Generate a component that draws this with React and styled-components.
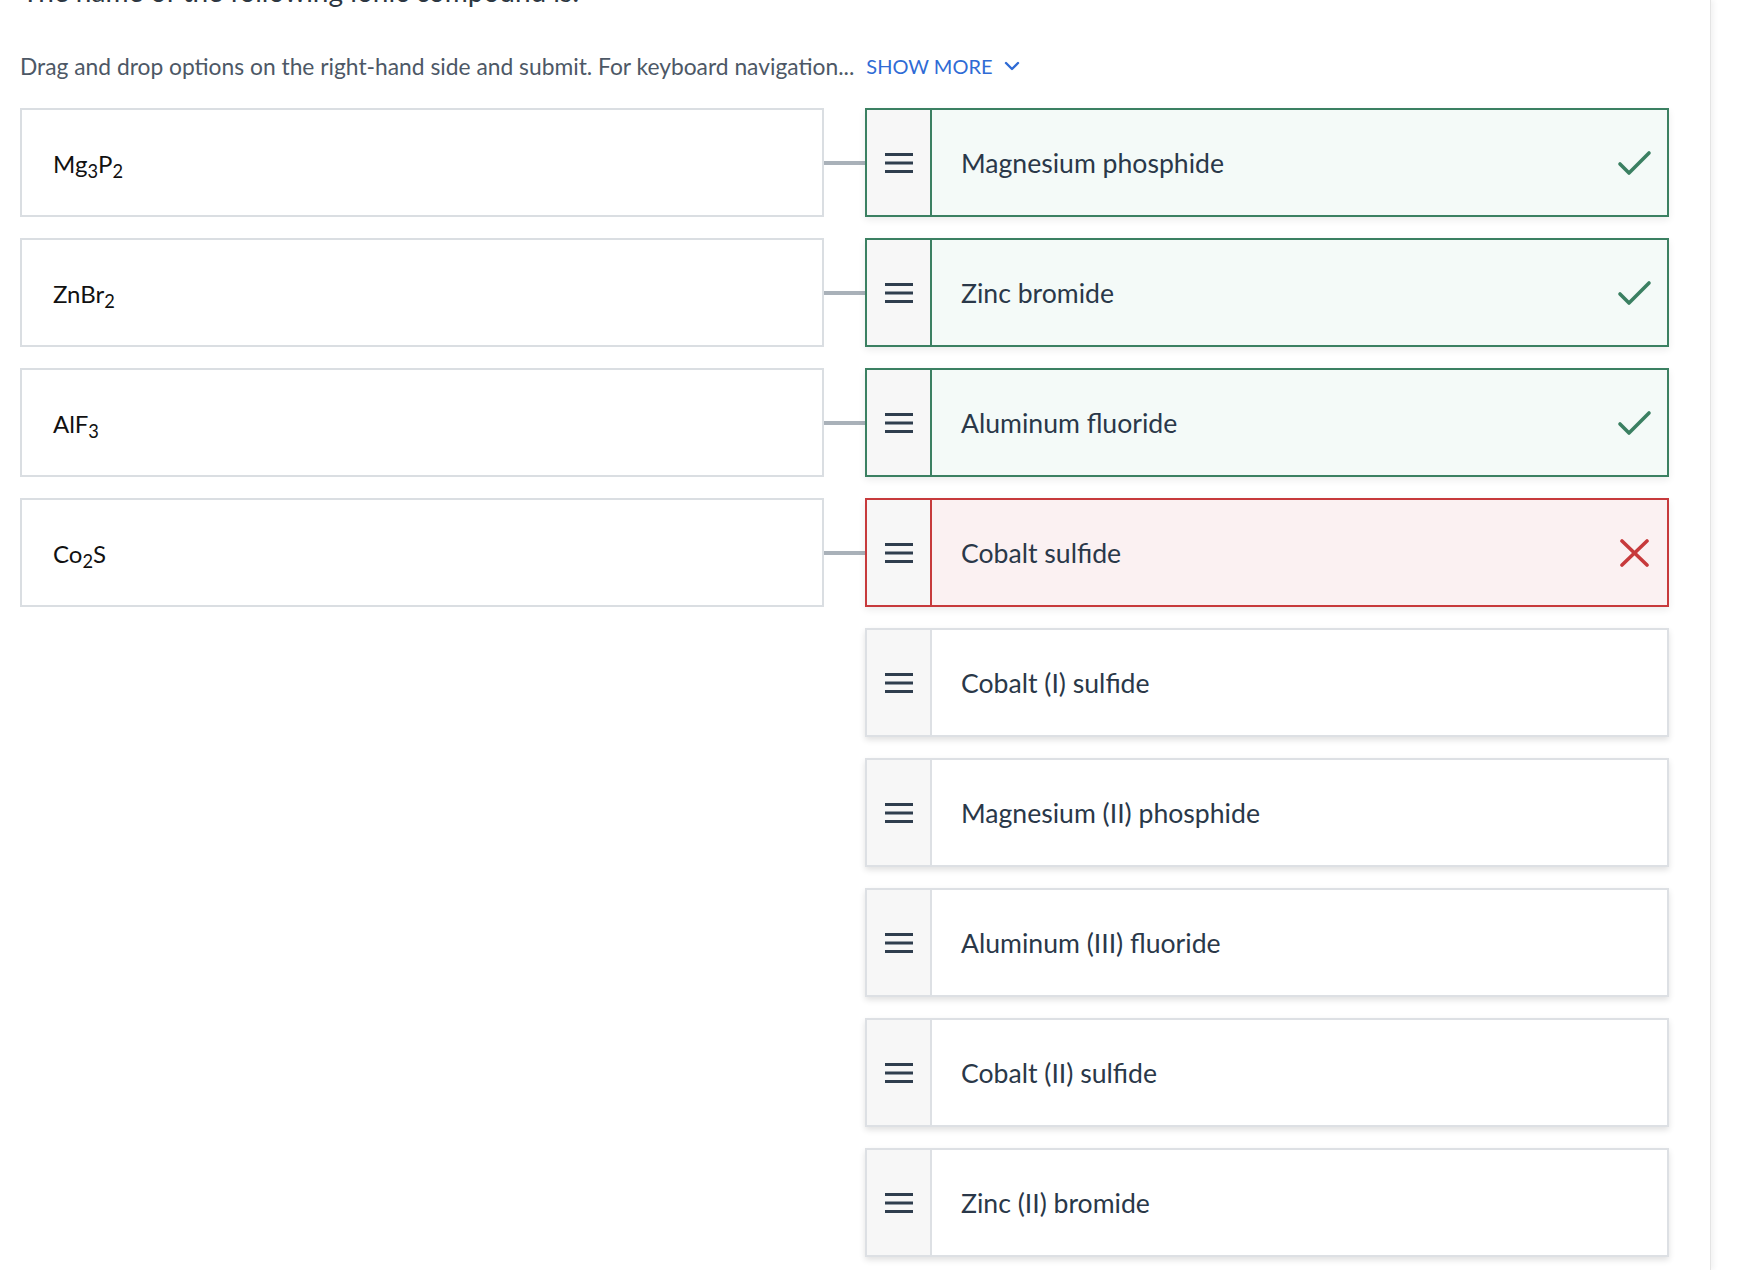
import React from "react";
import styled, { createGlobalStyle } from "styled-components";

const Global = createGlobalStyle`
  html, body { margin: 0; padding: 0; background: #ffffff; }
  body { font-family: "Lato", "Open Sans", "Liberation Sans", sans-serif; }
  * { box-sizing: border-box; }
`;

const Page = styled.div`
  display: flex;
  min-height: 1270px;
  overflow: hidden;
`;

const Main = styled.main`
  width: 1711px;
  flex: none;
  padding: 0 0 0 20px;
  border-right: 1px solid #e4e4e4;
  box-shadow: 3px 0 5px rgba(0, 0, 0, 0.05);
`;

const Title = styled.h2`
  margin: -25px 0 0 2px;
  font-size: 28px;
  line-height: 32px;
  font-weight: 400;
  color: #2d3742;
`;

const Instructions = styled.p`
  margin: 42px 0 0;
  height: 34px;
  display: flex;
  align-items: center;
  gap: 12px;
  font-size: 22.8px;
  color: #4d5866;
`;

const ShowMore = styled.button`
  border: none;
  background: none;
  padding: 0;
  display: inline-flex;
  align-items: center;
  gap: 12px;
  font: inherit;
  font-size: 20px;
  color: #2f6bd5;
  cursor: pointer;
`;

const Board = styled.div`
  margin-top: 25px;
  display: flex;
  align-items: flex-start;
`;

const Column = styled.div`
  display: flex;
  flex-direction: column;
  gap: 21px;
`;

const PromptRow = styled.div`
  display: flex;
  align-items: center;
`;

const Prompt = styled.div`
  width: 804px;
  height: 109px;
  border: 2px solid #dadee2;
  background: #fff;
  display: flex;
  align-items: center;
  padding: 2px 0 0 31px;
`;

const Formula = styled.span`
  font-size: 24px;
  line-height: 1;
  color: #111;
  sub {
    font-size: 0.76em;
    vertical-align: -0.3em;
    line-height: 0;
  }
`;

const Connector = styled.div`
  width: 41px;
  height: 4px;
  background: #a9b1b9;
`;

const tones = {
  correct: { border: "#3b8062", bg: "#f4faf8", sep: "#3b8062", shadow: "0 3px 7px rgba(0,0,0,0.08)" },
  wrong: { border: "#c73a3c", bg: "#fbf1f2", sep: "#c73a3c", shadow: "0 3px 7px rgba(0,0,0,0.08)" },
  idle: { border: "#dde0e4", bg: "#ffffff", sep: "#dde0e4", shadow: "0 3px 6px rgba(0,0,0,0.12)" },
};

const Answer = styled.div`
  width: 804px;
  height: 109px;
  display: flex;
  border: 2px solid ${(p) => tones[p.$tone].border};
  background: ${(p) => tones[p.$tone].bg};
  box-shadow: ${(p) => tones[p.$tone].shadow};
`;

const Handle = styled.div`
  width: 65px;
  flex: none;
  background: #f7f7f7;
  border-right: 2px solid ${(p) => tones[p.$tone].sep};
  display: flex;
  align-items: center;
  justify-content: center;
`;

const AnswerText = styled.div`
  flex: 1;
  display: flex;
  align-items: center;
  padding-left: 29px;
  font-size: 26.6px;
  color: #2a3849;
`;

const Mark = styled.div`
  width: 60px;
  flex: none;
  display: flex;
  align-items: center;
  justify-content: center;
  padding-right: 6px;
`;

const HandleIcon = () => (
  <svg width="28" height="20" viewBox="0 0 28 20" aria-hidden="true">
    <g stroke="#2f3e4e" strokeWidth="3">
      <line x1="0" y1="1.5" x2="28" y2="1.5" />
      <line x1="0" y1="10" x2="28" y2="10" />
      <line x1="0" y1="18.5" x2="28" y2="18.5" />
    </g>
  </svg>
);

const CheckIcon = () => (
  <svg width="35" height="28" viewBox="0 0 35 28" aria-hidden="true">
    <polyline points="3,15 12,24 32,4" fill="none" stroke="#3b8062" strokeWidth="3.6" strokeLinecap="round" strokeLinejoin="round" />
  </svg>
);

const CrossIcon = () => (
  <svg width="29" height="28" viewBox="0 0 29 28" aria-hidden="true">
    <g stroke="#c73a3c" strokeWidth="3.6" strokeLinecap="round">
      <line x1="2" y1="2" x2="27" y2="26" />
      <line x1="27" y1="2" x2="2" y2="26" />
    </g>
  </svg>
);

const Chevron = () => (
  <svg width="16" height="10" viewBox="0 0 16 10" aria-hidden="true">
    <polyline points="2,2 8,8 14,2" fill="none" stroke="#2f6bd5" strokeWidth="2.4" strokeLinecap="round" strokeLinejoin="round" />
  </svg>
);

const prompts = [
  <>Mg<sub>3</sub>P<sub>2</sub></>,
  <>ZnBr<sub>2</sub></>,
  <>AlF<sub>3</sub></>,
  <>Co<sub>2</sub>S</>,
];

const answers = [
  { text: "Magnesium phosphide", tone: "correct" },
  { text: "Zinc bromide", tone: "correct" },
  { text: "Aluminum fluoride", tone: "correct" },
  { text: "Cobalt sulfide", tone: "wrong" },
  { text: "Cobalt (I) sulfide", tone: "idle" },
  { text: "Magnesium (II) phosphide", tone: "idle" },
  { text: "Aluminum (III) fluoride", tone: "idle" },
  { text: "Cobalt (II) sulfide", tone: "idle" },
  { text: "Zinc (II) bromide", tone: "idle" },
];

export default function App() {
  return (
    <>
      <Global />
      <Page>
        <Main>
          <Title>The name of the following ionic compound is:</Title>
          <Instructions>
            Drag and drop options on the right-hand side and submit. For keyboard navigation...
            <ShowMore>
              SHOW MORE <Chevron />
            </ShowMore>
          </Instructions>
          <Board>
            <Column>
              {prompts.map((p, i) => (
                <PromptRow key={i}>
                  <Prompt>
                    <Formula>{p}</Formula>
                  </Prompt>
                  <Connector />
                </PromptRow>
              ))}
            </Column>
            <Column>
              {answers.map((a) => (
                <Answer key={a.text} $tone={a.tone}>
                  <Handle $tone={a.tone}>
                    <HandleIcon />
                  </Handle>
                  <AnswerText>{a.text}</AnswerText>
                  <Mark>
                    {a.tone === "correct" && <CheckIcon />}
                    {a.tone === "wrong" && <CrossIcon />}
                  </Mark>
                </Answer>
              ))}
            </Column>
          </Board>
        </Main>
      </Page>
    </>
  );
}
